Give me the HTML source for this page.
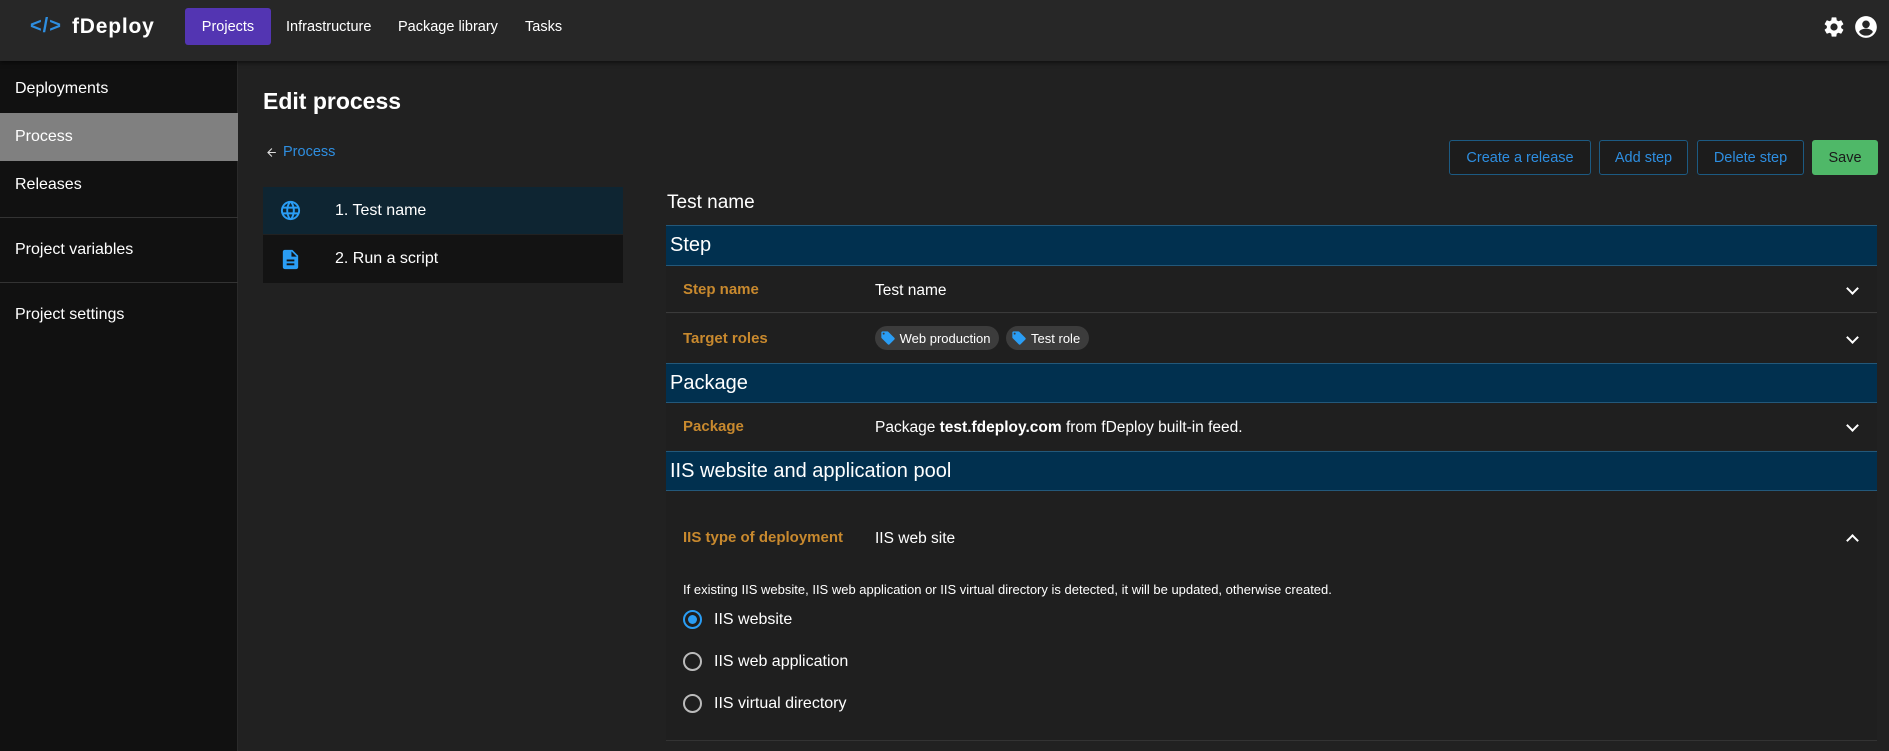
<!DOCTYPE html>
<html><head><meta charset="utf-8"><style>
*{box-sizing:border-box;margin:0;padding:0}
body{width:1889px;height:751px;overflow:hidden;background:#212121;font-family:"Liberation Sans",Arial,sans-serif;color:#fff;position:relative}
.hdr{position:absolute;left:0;top:0;width:1889px;height:61px;background:#272727;box-shadow:0 2px 4px rgba(0,0,0,.5);z-index:2}
.abs{position:absolute}
.nav{position:absolute;top:19px;font-size:14.5px;color:#fff}
.side{position:absolute;left:0;top:61px;width:238px;height:690px;background:#111;border-right:1px solid #2a2a2a}
.si{position:absolute;left:15px;font-size:16px}
.hr{position:absolute;left:0;width:238px;height:1px;background:#333}
.btn{position:absolute;top:140px;height:35px;border:1px solid #1c5a82;border-radius:3px;color:#2e8ee0;font-size:14.5px;display:flex;align-items:center;justify-content:center;background:#1c1c1c}
.sec{position:absolute;left:666px;width:1211px;background:#01304f;border-top:1px solid #23587a;border-bottom:1px solid #23587a;font-size:20px;padding-left:4px;display:flex;align-items:center}
.row{position:absolute;left:666px;width:1211px;background:#1f1f1f}
.lbl{position:absolute;left:17px;color:#c8892e;font-weight:bold;font-size:15px}
.val{position:absolute;left:209px;font-size:15.5px}
.chev{position:absolute;right:20px;width:9px;height:9px;border-right:2px solid #fff;border-bottom:2px solid #fff;transform:rotate(45deg)}
.chip{display:inline-flex;align-items:center;height:24px;border-radius:12px;background:#3c3c3c;font-size:13px;padding:0 9px 0 5px;margin-right:7px}
.radio{position:absolute;left:683px;width:19px;height:19px;border-radius:50%;border:2px solid #bbb}
.rl{position:absolute;left:714px;font-size:16px}
</style></head><body>
<div class="hdr">
 <div class="abs" style="left:30px;top:15px;font-size:20px;font-weight:bold;color:#2e8ee0;letter-spacing:1px">&lt;/&gt;</div>
 <div class="abs" style="left:72px;top:15px;font-size:21px;font-weight:bold;letter-spacing:.8px">fDeploy</div>
 <div class="abs" style="left:185px;top:8px;width:86px;height:37px;background:#5335b2;border-radius:3px;font-size:14.5px;display:flex;align-items:center;justify-content:center">Projects</div>
 <div class="nav" style="left:286px">Infrastructure</div>
 <div class="nav" style="left:398px">Package library</div>
 <div class="nav" style="left:525px">Tasks</div>
 <svg class="abs" style="left:1822px;top:15px" width="24" height="24" viewBox="0 0 24 24"><path fill="#fff" d="M19.14 12.94c.04-.3.06-.61.06-.94s-.02-.64-.07-.94l2.030-1.58a.49.49 0 0 0 .12-.61l-1.92-3.32a.49.49 0 0 0-.59-.22l-2.39.96c-.5-.38-1.03-.7-1.62-.94l-.36-2.54a.48.48 0 0 0-.48-.41h-3.84c-.24 0-.43.17-.47.41l-.36 2.54c-.59.24-1.130.57-1.62.94l-2.39-.96a.48.48 0 0 0-.59.22L2.74 8.87c-.12.21-.08.47.12.61l2.03 1.58c-.05.3-.09.63-.09.94s.02.64.07.94l-2.03 1.58a.49.49 0 0 0-.12.61l1.92 3.32c.12.22.37.29.59.22l2.39-.96c.5.38 1.03.7 1.62.94l.36 2.54c.05.24.24.41.48.41h3.84c.24 0 .44-.17.47-.41l.36-2.54c.59-.24 1.13-.56 1.62-.94l2.39.96c.22.08.47 0 .59-.22l1.920-3.32c.12-.22.07-.47-.12-.61l-2.01-1.58zM12 15.6A3.6 3.6 0 1 1 12 8.4a3.6 3.6 0 0 1 0 7.2z"/></svg>
 <svg class="abs" style="left:1853px;top:14px" width="26" height="26" viewBox="0 0 24 24"><path fill="#fff" d="M12 2C6.48 2 2 6.48 2 12s4.48 10 10 10 10-4.48 10-10S17.52 2 12 2zm0 4a3.5 3.5 0 1 1 0 7 3.5 3.5 0 0 1 0-7zm0 14c-2.6 0-4.9-1.3-6.3-3.3.03-2.1 4.2-3.2 6.3-3.2s6.27 1.1 6.3 3.2A7.6 7.6 0 0 1 12 20z"/></svg>
</div>
<div class="side">
 <div class="si" style="top:19px">Deployments</div>
 <div class="abs" style="left:0;top:52px;width:238px;height:48px;background:#808080"></div>
 <div class="si" style="top:67px">Process</div>
 <div class="si" style="top:115px">Releases</div>
 <div class="hr" style="top:156px"></div>
 <div class="si" style="top:180px">Project variables</div>
 <div class="hr" style="top:221px"></div>
 <div class="si" style="top:245px">Project settings</div>
</div>
<div class="abs" style="left:263px;top:88px;font-size:23px;font-weight:bold">Edit process</div>
<svg class="abs" style="left:265px;top:146px" width="13" height="13" viewBox="0 0 24 24"><path fill="#ddd" d="M20 11H7.83l5.59-5.59L12 4l-8 8 8 8 1.41-1.41L7.83 13H20v-2z"/></svg>
<div class="abs" style="left:283px;top:144px;font-size:14.5px;color:#2e8ee0">Process</div>
<div class="abs" style="left:263px;top:187px;width:360px;height:47px;background:#0e2532"></div>
<div class="abs" style="left:263px;top:235px;width:360px;height:48px;background:#131313"></div>
<svg class="abs" style="left:279px;top:199px" width="23" height="23" viewBox="0 0 24 24"><path fill="#2a9df4" d="M12 2a10 10 0 1 0 0 20 10 10 0 0 0 0-20zm6.9 6h-2.9a15.7 15.7 0 0 0-1.4-3.6A8 8 0 0 1 18.9 8zM12 4c.8 1.2 1.5 2.5 1.9 4h-3.8c.4-1.4 1.1-2.8 1.9-4zM4.3 14a8 8 0 0 1 0-4h3.4a16 16 0 0 0 0 4H4.3zm.8 2h3c.3 1.3.8 2.5 1.4 3.6A8 8 0 0 1 5.1 16zM8 8H5.1a8 8 0 0 1 4.3-3.6C8.8 5.5 8.4 6.7 8 8zm4 12c-.8-1.2-1.5-2.5-1.9-4h3.8c-.4 1.4-1.1 2.8-1.9 4zm2.3-6H9.7a14.7 14.7 0 0 1 0-4h4.6a14.7 14.7 0 0 1 0 4zm.3 5.6c.6-1.1 1.1-2.3 1.4-3.6h2.9a8 8 0 0 1-4.3 3.6zM16.4 14a16 16 0 0 0 0-4h3.4a8 8 0 0 1 0 4h-3.4z"/></svg>
<svg class="abs" style="left:279px;top:248px" width="23" height="23" viewBox="0 0 24 24"><path fill="#2a9df4" d="M14 2H6c-1.1 0-2 .9-2 2v16c0 1.1.9 2 2 2h12c1.1 0 2-.9 2-2V8l-6-6zm2 16H8v-2h8v2zm0-4H8v-2h8v2zm-3-5V3.5L18.5 9H13z"/></svg>
<div class="abs" style="left:335px;top:202px;font-size:16px">1. Test name</div>
<div class="abs" style="left:335px;top:250px;font-size:16px">2. Run a script</div>
<div class="btn" style="left:1449px;width:142px">Create a release</div>
<div class="btn" style="left:1599px;width:89px">Add step</div>
<div class="btn" style="left:1697px;width:107px">Delete step</div>
<div class="btn" style="left:1812px;width:66px;background:#4fb868;border-color:#4fb868;color:#1a1a1a">Save</div>
<div class="abs" style="left:667px;top:192px;font-size:19px">Test name</div>
<div class="sec" style="top:225px;height:41px">Step</div>
<div class="row" style="top:266px;height:47px;border-bottom:1px solid #3a3a3a"><div class="lbl" style="top:15px">Step name</div><div class="val" style="top:16px">Test name</div><div class="chev" style="top:18px"></div></div>
<div class="row" style="top:314px;height:49px"><div class="lbl" style="top:16px">Target roles</div>
 <div class="val" style="top:12px"><span class="chip"><svg width="16" height="16" viewBox="0 0 24 24"><path fill="#2a9df4" d="M21.4 11.6l-9-9A2 2 0 0 0 11 2H4a2 2 0 0 0-2 2v7c0 .55.22 1.05.59 1.42l9 9a2 2 0 0 0 2.82 0l7-7a2 2 0 0 0 0-2.82zM5.5 7A1.5 1.5 0 1 1 5.5 4a1.5 1.5 0 0 1 0 3z"/></svg>&nbsp;Web production</span><span class="chip"><svg width="16" height="16" viewBox="0 0 24 24"><path fill="#2a9df4" d="M21.4 11.6l-9-9A2 2 0 0 0 11 2H4a2 2 0 0 0-2 2v7c0 .55.22 1.05.59 1.42l9 9a2 2 0 0 0 2.82 0l7-7a2 2 0 0 0 0-2.82zM5.5 7A1.5 1.5 0 1 1 5.5 4a1.5 1.5 0 0 1 0 3z"/></svg>&nbsp;Test role</span></div>
 <div class="chev" style="top:19px"></div></div>
<div class="sec" style="top:363px;height:40px">Package</div>
<div class="row" style="top:403px;height:47px"><div class="lbl" style="top:15px">Package</div><div class="val" style="top:16px">Package <b>test.fdeploy.com</b> from fDeploy built-in feed.</div><div class="chev" style="top:18px"></div></div>
<div class="sec" style="top:451px;height:40px">IIS website and application pool</div>
<div class="row" style="top:491px;height:250px;border-bottom:1px solid #333">
 <div class="lbl" style="top:38px">IIS type of deployment</div><div class="val" style="top:39px">IIS web site</div>
 <div class="chev" style="top:45px;transform:rotate(225deg)"></div>
 <div class="abs" style="left:17px;top:91px;font-size:13px">If existing IIS website, IIS web application or IIS virtual directory is detected, it will be updated, otherwise created.</div>
</div>
<div class="radio" style="top:610px;border-color:#2a9df4"><div style="position:absolute;left:3px;top:3px;width:9px;height:9px;border-radius:50%;background:#2a9df4"></div></div>
<div class="rl" style="top:611px">IIS website</div>
<div class="radio" style="top:652px"></div><div class="rl" style="top:653px">IIS web application</div>
<div class="radio" style="top:694px"></div><div class="rl" style="top:695px">IIS virtual directory</div>
</body></html>
